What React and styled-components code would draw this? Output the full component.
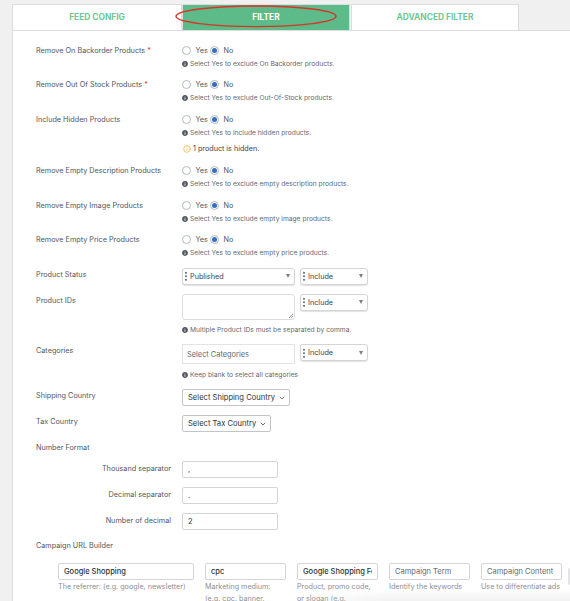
import React from 'react';
import styled, { createGlobalStyle } from 'styled-components';
import { ChevronDown, Info } from 'lucide-react';
import { FaInfoCircle } from 'react-icons/fa';

const Global = createGlobalStyle`
  html, body { margin: 0; padding: 0; background: #f0f0f1; }
  body { font-family: Inter, "Liberation Sans", sans-serif; color: #50575e; }
`;

const Page = styled.div`
  position: relative;
  width: 570px;
  height: 601px;
  overflow: hidden;
  padding: 4px 0 0 12px;
  box-sizing: border-box;
`;

const Tabs = styled.div`
  display: flex;
  height: 26px;
  gap: 1px;
`;

const Tab = styled.div`
  width: 168px;
  box-sizing: border-box;
  display: flex;
  align-items: center;
  justify-content: center;
  padding-bottom: 1px;
  font-size: 8.4px;
  font-weight: 700;
  background: ${p => (p.$active ? '#5cbb88' : '#fff')};
  color: ${p => (p.$active ? '#fff' : '#6cc896')};
  border: 1px solid #dcdcde;
  border-bottom: none;
  &:first-child { width: 170px; margin-right: -1px; }
`;

const Ellipse = styled.svg`
  position: absolute;
  left: 172px;
  top: 2px;
`;

const Panel = styled.div`
  background: #fff;
  border-top: 1px solid #dcdcde;
  border-left: 1px solid #dcdcde;
  height: 580px;
  padding: 12.5px 0 0 23px;
  box-sizing: border-box;
`;

const Row = styled.div`
  display: grid;
  grid-template-columns: 146px 1fr;
  margin-bottom: ${p => p.$gap ?? 9.5}px;
`;

const Label = styled.div`
  font-size: 7.25px;
  line-height: 12px;
  padding-top: 1px;
  color: #50575e;
`;

const Star = styled.span`
  color: #d63638;
`;

const Radios = styled.div`
  display: flex;
  align-items: center;
  height: 13px;
  font-size: 7.25px;
`;

const Radio = styled.span`
  width: 9px;
  height: 9px;
  box-sizing: border-box;
  border-radius: 50%;
  border: 1px solid #b4b9be;
  background: #fff;
  display: inline-flex;
  align-items: center;
  justify-content: center;
  margin-right: 4.5px;
  &::after {
    content: '';
    display: ${p => (p.$on ? 'block' : 'none')};
    width: 5px;
    height: 5px;
    border-radius: 50%;
    background: #2f6fc4;
  }
`;

const RadioText = styled.span`
  margin-right: 2px;
  color: #50575e;
`;

const Hint = styled.div`
  display: flex;
  align-items: center;
  gap: 2px;
  font-size: 6.7px;
  line-height: 10px;
  margin-top: ${p => p.$top ?? 2}px;
  color: #646970;
  svg { color: #50575e; flex: none; }
`;

const Notice = styled.div`
  display: flex;
  align-items: center;
  gap: 2px;
  font-size: 7.2px;
  line-height: 12px;
  margin-top: 5px;
  margin-left: 1px;
  color: #3c434a;
  svg { color: #f0a43a; flex: none; }
`;

const Controls = styled.div`
  display: flex;
  gap: 5px;
  align-items: flex-start;
`;

const PickBox = styled.div`
  width: ${p => p.$w}px;
  height: 17px;
  box-sizing: border-box;
  border: 1px solid #d5d5d8;
  border-radius: 3px;
  background: #fff;
  display: flex;
  align-items: center;
  font-size: 7.25px;
  color: #3c434a;
  box-shadow: 0 1px 1px rgba(0, 0, 0, 0.12);
  padding: 0 4px 0 2px;
`;

const Grip = styled.span`
  width: 2px;
  height: 10px;
  margin-right: 3px;
  background: radial-gradient(circle, #6d7a88 0.9px, transparent 1px) 0 0 / 2px 3.5px repeat-y;
`;

const Caret = styled.span`
  margin-left: auto;
  width: 0;
  height: 0;
  border-left: 2.5px solid transparent;
  border-right: 2.5px solid transparent;
  border-top: 4px solid #7a7f85;
`;

const TextArea = styled.div`
  position: relative;
  width: 113px;
  height: 26px;
  box-sizing: border-box;
  border: 1px solid #dcdcde;
  border-radius: 3px;
  background: #fff;
  &::after {
    content: '';
    position: absolute;
    right: 1px;
    bottom: 1px;
    width: 5px;
    height: 5px;
    background: linear-gradient(135deg, transparent 50%, #999 50%, #999 60%, transparent 60%, transparent 75%, #999 75%, #999 85%, transparent 85%);
  }
`;

const Search = styled.div`
  width: 113px;
  height: 20px;
  box-sizing: border-box;
  border: 1px solid #e3e3e5;
  background: #fff;
  display: flex;
  align-items: center;
  padding-left: 4px;
  font-size: 7.4px;
  color: #646970;
`;

const CountrySelect = styled.div`
  display: flex;
  width: fit-content;
  align-items: center;
  gap: 3px;
  height: 17px;
  box-sizing: border-box;
  padding: 0 3px 0 5px;
  border: 1px solid #c3c4c7;
  border-radius: 2px;
  background: #fff;
  font-size: 7.6px;
  color: #2c3338;
`;

const Heading = styled.div`
  font-size: 7.25px;
  line-height: 12px;
  padding-top: 1.5px;
  margin-bottom: ${p => p.$gap}px;
`;

const FormatRow = styled.div`
  display: grid;
  grid-template-columns: 135px 96px;
  column-gap: 11px;
  margin-bottom: ${p => p.$gap ?? 9}px;
`;

const FormatLabel = styled.div`
  font-size: 7.25px;
  line-height: 12px;
  padding-top: 1.5px;
  text-align: right;
`;

const Field = styled.div`
  height: 17px;
  box-sizing: border-box;
  border: 1px solid #d5d5d8;
  border-radius: 2px;
  background: #fff;
  display: flex;
  align-items: center;
  padding: 0 5px;
  font-size: 7.5px;
  white-space: nowrap;
  font-weight: ${p => (p.$bold ? 500 : 400)};
  color: ${p => (p.$muted ? '#646970' : '#2c3338')};
`;

const FieldText = styled.span`
  overflow: hidden;
`;

const UrlGrid = styled.div`
  display: grid;
  grid-template-columns: 136px repeat(4, 81px);
  column-gap: 11px;
  margin-left: 22px;
`;

const UrlHelp = styled.div`
  font-size: 7.2px;
  line-height: 11px;
  margin-top: 1px;
  color: #8c8f94;
  white-space: nowrap;
`;

const Edge = styled.div`
  position: absolute;
  right: -3px;
  top: 568px;
  width: 5px;
  height: 17px;
  border-radius: 2px;
  background: #e4e4e6;
`;

const Fade = styled.div`
  position: absolute;
  left: 290px;
  right: 0;
  bottom: 0;
  height: 12px;
  background: linear-gradient(to bottom, rgba(230, 230, 230, 0), rgba(225, 225, 225, 0.45));
  mask-image: linear-gradient(to right, transparent, #000 35%);
`;

const Note = ({ children, top }) => (
  <Hint $top={top}>
    <FaInfoCircle size={6} />
    {children}
  </Hint>
);

const YesNo = ({ label, required, note, warning }) => (
  <Row>
    <Label>
      {label}
      {required && <Star> *</Star>}
    </Label>
    <div>
      <Radios>
        <Radio />
        <RadioText>Yes</RadioText>
        <Radio $on />
        <RadioText>No</RadioText>
      </Radios>
      <Note>{note}</Note>
      {warning && (
        <Notice>
          <Info size={8} />
          {warning}
        </Notice>
      )}
    </div>
  </Row>
);

const Pick = ({ w, text }) => (
  <PickBox $w={w}>
    <Grip />
    {text}
    <Caret />
  </PickBox>
);

const urlFields = [
  { value: 'Google Shopping', help: ['The referrer: (e.g. google, newsletter)'] },
  { value: 'cpc', help: ['Marketing medium:', '(e.g. cpc, banner,'] },
  { value: 'Google Shopping Feed', help: ['Product, promo code,', 'or slogan (e.g.'] },
  { value: 'Campaign Term', muted: true, help: ['Identify the keywords'] },
  { value: 'Campaign Content', muted: true, help: ['Use to differentiate ads'] },
];

export default function App() {
  return (
    <>
      <Global />
      <Page>
        <Tabs>
          <Tab>FEED CONFIG</Tab>
          <Tab $active>FILTER</Tab>
          <Tab>ADVANCED FILTER</Tab>
        </Tabs>
        <Ellipse width="168" height="28" viewBox="0 0 168 28">
          <ellipse cx="84" cy="14.3" rx="80" ry="10.3" fill="none" stroke="#d8342c" strokeWidth="1.4" />
        </Ellipse>
        <Panel>
          <YesNo label="Remove On Backorder Products" required note="Select Yes to exclude On Backorder products." />
          <YesNo label="Remove Out Of Stock Products" required note="Select Yes to exclude Out-Of-Stock products." />
          <YesNo label="Include Hidden Products" note="Select Yes to include hidden products." warning="1 product is hidden." />
          <YesNo label="Remove Empty Description Products" note="Select Yes to exclude empty description products." />
          <YesNo label="Remove Empty Image Products" note="Select Yes to exclude empty image products." />
          <YesNo label="Remove Empty Price Products" note="Select Yes to exclude empty price products." />
          <Row $gap={9}>
            <Label>Product Status</Label>
            <Controls>
              <Pick w={113} text="Published" />
              <Pick w={68} text="Include" />
            </Controls>
          </Row>
          <Row $gap={9.3}>
            <Label>Product IDs</Label>
            <div>
              <Controls>
                <TextArea />
                <Pick w={68} text="Include" />
              </Controls>
              <Note top={5.7}>Multiple Product IDs must be separated by comma.</Note>
            </div>
          </Row>
          <Row $gap={9}>
            <Label>Categories</Label>
            <div>
              <Controls>
                <Search>Select Categories</Search>
                <Pick w={68} text="Include" />
              </Controls>
              <Note top={6}>Keep blank to select all categories</Note>
            </div>
          </Row>
          <Row $gap={9}>
            <Label>Shipping Country</Label>
            <CountrySelect>
              Select Shipping Country
              <ChevronDown size={8} />
            </CountrySelect>
          </Row>
          <Row $gap={8.5}>
            <Label>Tax Country</Label>
            <CountrySelect>
              Select Tax Country
              <ChevronDown size={8} />
            </CountrySelect>
          </Row>
          <Heading $gap={7}>Number Format</Heading>
          <FormatRow>
            <FormatLabel>Thousand separator</FormatLabel>
            <Field>,</Field>
          </FormatRow>
          <FormatRow>
            <FormatLabel>Decimal separator</FormatLabel>
            <Field>.</Field>
          </FormatRow>
          <FormatRow $gap={8}>
            <FormatLabel>Number of decimal</FormatLabel>
            <Field>2</Field>
          </FormatRow>
          <Heading $gap={11.5}>Campaign URL Builder</Heading>
          <UrlGrid>
            {urlFields.map(f => (
              <div key={f.value}>
                <Field $muted={f.muted} $bold={!f.muted}>
                  <FieldText>{f.value}</FieldText>
                </Field>
                {f.help.map(line => (
                  <UrlHelp key={line}>{line}</UrlHelp>
                ))}
              </div>
            ))}
          </UrlGrid>
        </Panel>
        <Edge />
        <Fade />
      </Page>
    </>
  );
}
